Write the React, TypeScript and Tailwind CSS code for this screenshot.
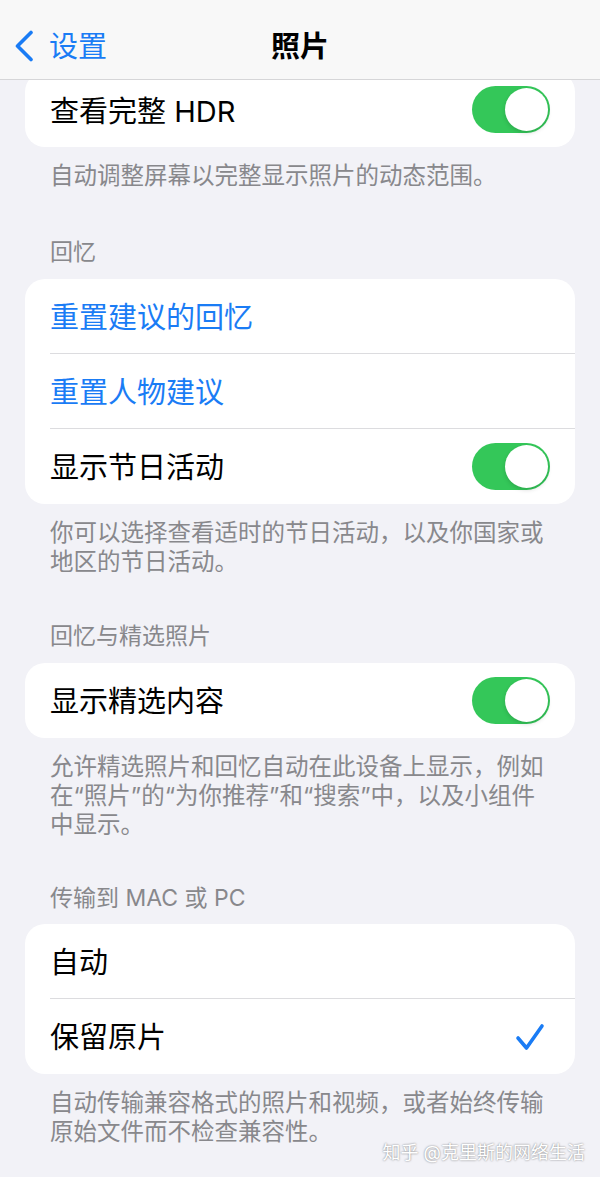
import React from 'react';

const font = "font-['Inter','Noto_Sans_CJK_SC',sans-serif]";

function Toggle() {
  return (
    <div className="relative w-[78px] h-[47px] rounded-full bg-[#34c759] shrink-0">
      <div className="absolute right-[2px] top-[2px] w-[43px] h-[43px] rounded-full bg-white shadow-[0_2px_4px_rgba(0,0,0,0.15)]" />
    </div>
  );
}

function Check() {
  return (
    <svg width="30" height="28" viewBox="0 0 30 28" fill="none" className="mr-[5px]">
      <polyline
        points="3,15 11.5,25 27,3"
        stroke="#1a7cf5"
        strokeWidth="3.6"
        strokeLinecap="round"
        strokeLinejoin="round"
      />
    </svg>
  );
}

type RowProps = {
  label: string;
  blue?: boolean;
  right?: React.ReactNode;
  last?: boolean;
};

function Row({ label, blue, right, last }: RowProps) {
  return (
    <div className="pl-[25px]">
      <div
        className={`h-[75px] pr-[25px] flex items-center justify-between ${
          last ? '' : 'border-b border-[#dcdcdf]'
        }`}
      >
        <span className={`pt-[2px] text-[29px] leading-none ${blue ? 'text-[#1a7cf5]' : 'text-black'}`}>
          {label}
        </span>
        {right}
      </div>
    </div>
  );
}

function Footer({ lines }: { lines: string[] }) {
  return (
    <div className="mt-[14px] px-[50px] text-[23.5px] leading-[29px] text-[#88888c]">
      {lines.map((l) => (
        <div key={l} className="whitespace-nowrap">
          {l}
        </div>
      ))}
    </div>
  );
}

function SectionTitle({ text, mt }: { text: string; mt: string }) {
  return (
    <div className={`${mt} px-[50px] text-[23px] leading-[29px] text-[#88888c] whitespace-nowrap`}>
      {text}
    </div>
  );
}

export default function App() {
  return (
    <div className={`relative w-[600px] h-[1177px] overflow-hidden bg-[#f2f2f7] ${font}`}>
      {/* Nav bar */}
      <div className="relative z-10 h-[80px] bg-[#f8f8f8] border-b border-[#d6d6d8] flex items-center pt-[12px]">
        <div className="flex items-center pl-[14px] text-[#1a7cf5]">
          <svg width="20" height="32" viewBox="0 0 20 32" fill="none">
            <polyline
              points="17,2.5 3.5,16 17,29.5"
              stroke="#1a7cf5"
              strokeWidth="3.6"
              strokeLinecap="round"
              strokeLinejoin="round"
            />
          </svg>
          <span className="ml-[15px] pt-[2px] text-[29px] leading-none">设置</span>
        </div>
        <div className="absolute left-0 right-0 top-[12px] bottom-0 flex items-center justify-center pointer-events-none">
          <span className="pt-[2px] text-[29px] leading-none font-bold text-black">照片</span>
        </div>
      </div>

      {/* HDR card, scrolled partly under nav */}
      <div className="-mt-[8px] mx-[25px] bg-white rounded-[20px] overflow-hidden">
        <div className="h-[75px] pl-[25px] pr-[25px] flex items-center justify-between">
          <span className="pt-[3px] text-[29px] leading-none text-black">查看完整 HDR</span>
          <Toggle />
        </div>
      </div>
      <Footer lines={['自动调整屏幕以完整显示照片的动态范围。']} />

      <SectionTitle text="回忆" mt="mt-[48px]" />
      <div className="mt-[12px] mx-[25px] bg-white rounded-[20px] overflow-hidden">
        <Row label="重置建议的回忆" blue />
        <Row label="重置人物建议" blue />
        <Row label="显示节日活动" right={<Toggle />} last />
      </div>
      <Footer lines={['你可以选择查看适时的节日活动，以及你国家或', '地区的节日活动。']} />

      <SectionTitle text="回忆与精选照片" mt="mt-[46px]" />
      <div className="mt-[12px] mx-[25px] bg-white rounded-[20px] overflow-hidden">
        <Row label="显示精选内容" right={<Toggle />} last />
      </div>
      <Footer
        lines={[
          '允许精选照片和回忆自动在此设备上显示，例如',
          '在“照片”的“为你推荐”和“搜索”中，以及小组件',
          '中显示。',
        ]}
      />

      <SectionTitle text="传输到 MAC 或 PC" mt="mt-[45px]" />
      <div className="mt-[11px] mx-[25px] bg-white rounded-[20px] overflow-hidden">
        <Row label="自动" />
        <Row label="保留原片" right={<Check />} last />
      </div>
      <Footer lines={['自动传输兼容格式的照片和视频，或者始终传输', '原始文件而不检查兼容性。']} />

      {/* watermark */}
      <div className="absolute right-[15px] bottom-[12px] text-[18px] leading-[24px] text-white whitespace-nowrap [text-shadow:0_0_2px_rgba(0,0,0,0.55)]">
        知乎 @克里斯的网络生活
      </div>
    </div>
  );
}
